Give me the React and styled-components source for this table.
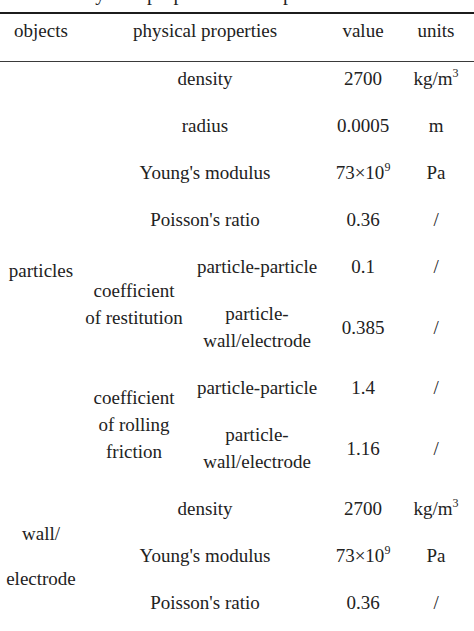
import React from "react";
import styled, { createGlobalStyle } from "styled-components";

const GlobalStyle = createGlobalStyle`
  html, body {
    margin: 0;
    padding: 0;
    background: #ffffff;
    overflow: hidden;
  }
  body {
    font-family: "Liberation Serif", "Times New Roman", serif;
    color: #222222;
  }
`;

const Page = styled.div`
  width: 474px;
`;

const Caption = styled.div`
  margin-top: -20px;
  padding-left: 10px;
  font-size: 20px;
  line-height: 27px;
  white-space: nowrap;
`;

const Table = styled.table`
  width: 474px;
  margin-top: 5px;
  table-layout: fixed;
  border-collapse: separate;
  border-spacing: 0;
  font-size: 19px;
  line-height: 27px;
`;

const HeadCell = styled.th`
  font-weight: normal;
  text-align: center;
  vertical-align: top;
  padding: 3px 0 17px;
  border-top: 2px solid #1c1c1c;
  border-bottom: 1px solid #3a3a3a;
`;

const Cell = styled.td`
  text-align: center;
  vertical-align: middle;
  padding: 3px 0 17px;
  line-height: ${(p) => (p.$spread ? "45px" : "27px")};
  white-space: nowrap;
`;

const Sup = styled.sup`
  font-size: 12px;
  line-height: 0;
  vertical-align: 8px;
`;

const Kg = () => (
  <>
    kg/m<Sup>3</Sup>
  </>
);

const Young = () => (
  <>
    73×10<Sup>9</Sup>
  </>
);

const PW = () => (
  <>
    particle-
    <br />
    wall/electrode
  </>
);

export default function App() {
  return (
    <Page>
      <GlobalStyle />
      <Caption>Table 1 Physical properties of the particles and wall/electrode</Caption>
      <Table>
        <colgroup>
          <col style={{ width: 82 }} />
          <col style={{ width: 104 }} />
          <col style={{ width: 142 }} />
          <col style={{ width: 70 }} />
          <col style={{ width: 76 }} />
        </colgroup>
        <thead>
          <tr>
            <HeadCell>objects</HeadCell>
            <HeadCell colSpan={2}>physical properties</HeadCell>
            <HeadCell>value</HeadCell>
            <HeadCell>units</HeadCell>
          </tr>
        </thead>
        <tbody>
          <tr>
            <Cell rowSpan={8}>particles</Cell>
            <Cell colSpan={2}>density</Cell>
            <Cell>2700</Cell>
            <Cell>
              <Kg />
            </Cell>
          </tr>
          <tr>
            <Cell colSpan={2}>radius</Cell>
            <Cell>0.0005</Cell>
            <Cell>m</Cell>
          </tr>
          <tr>
            <Cell colSpan={2}>Young's modulus</Cell>
            <Cell>
              <Young />
            </Cell>
            <Cell>Pa</Cell>
          </tr>
          <tr>
            <Cell colSpan={2}>Poisson's ratio</Cell>
            <Cell>0.36</Cell>
            <Cell>/</Cell>
          </tr>
          <tr>
            <Cell rowSpan={2}>
              coefficient
              <br />
              of restitution
            </Cell>
            <Cell>particle-particle</Cell>
            <Cell>0.1</Cell>
            <Cell>/</Cell>
          </tr>
          <tr>
            <Cell>
              <PW />
            </Cell>
            <Cell>0.385</Cell>
            <Cell>/</Cell>
          </tr>
          <tr>
            <Cell rowSpan={2}>
              coefficient
              <br />
              of rolling
              <br />
              friction
            </Cell>
            <Cell>particle-particle</Cell>
            <Cell>1.4</Cell>
            <Cell>/</Cell>
          </tr>
          <tr>
            <Cell>
              <PW />
            </Cell>
            <Cell>1.16</Cell>
            <Cell>/</Cell>
          </tr>
          <tr>
            <Cell rowSpan={3} $spread>
              wall/
              <br />
              electrode
            </Cell>
            <Cell colSpan={2}>density</Cell>
            <Cell>2700</Cell>
            <Cell>
              <Kg />
            </Cell>
          </tr>
          <tr>
            <Cell colSpan={2}>Young's modulus</Cell>
            <Cell>
              <Young />
            </Cell>
            <Cell>Pa</Cell>
          </tr>
          <tr>
            <Cell colSpan={2}>Poisson's ratio</Cell>
            <Cell>0.36</Cell>
            <Cell>/</Cell>
          </tr>
        </tbody>
      </Table>
    </Page>
  );
}
